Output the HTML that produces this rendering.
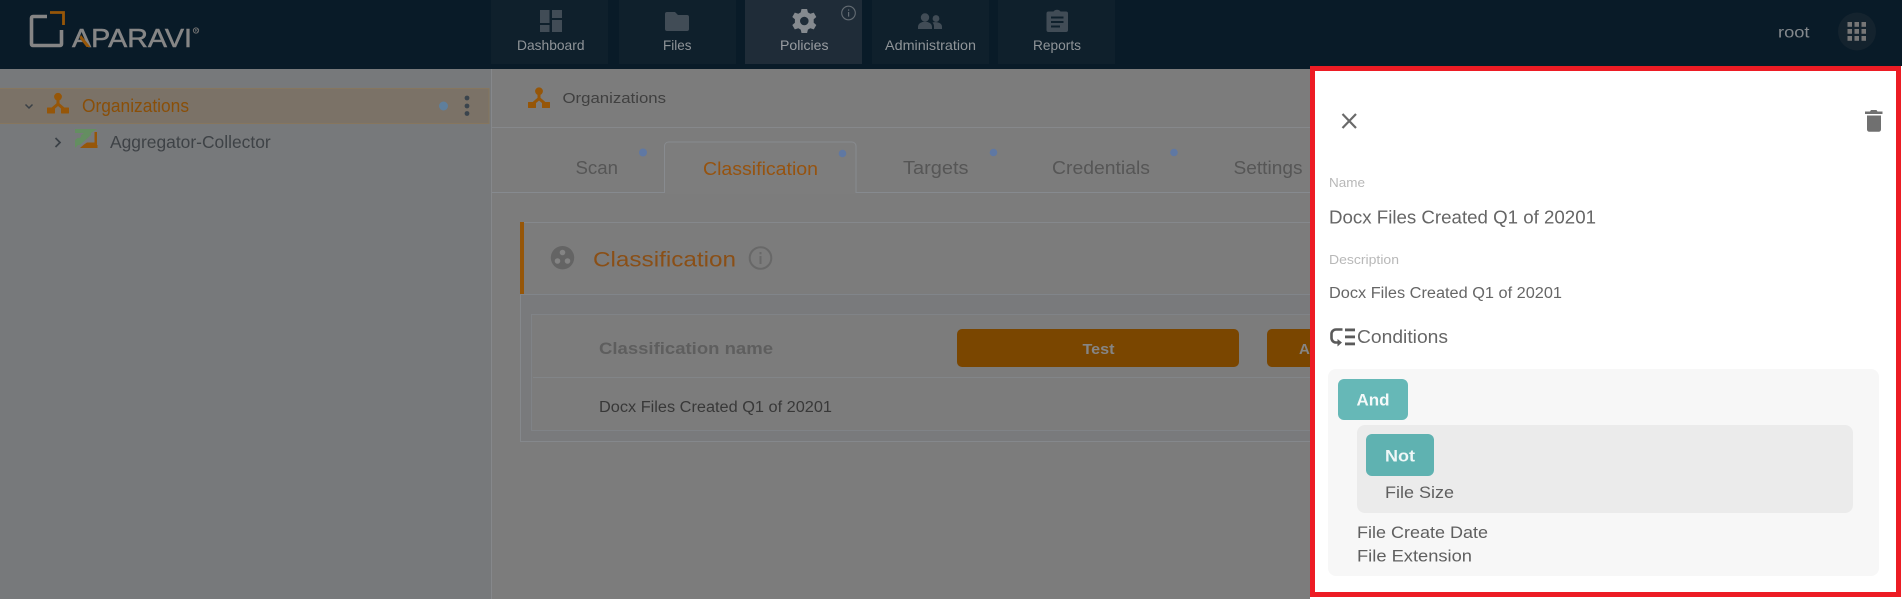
<!DOCTYPE html>
<html lang="en">
<head>
<meta charset="utf-8">
<title>Aparavi - Classification</title>
<style>
html,body{margin:0;padding:0;width:1902px;height:599px;overflow:hidden;background:#7c7c7c}
svg{display:block;position:absolute;left:0;top:0}
text{font-family:"Liberation Sans",sans-serif}
</style>
</head>
<body>
<svg width="1902" height="599" viewBox="0 0 1902 599" xmlns="http://www.w3.org/2000/svg">
<defs>
<g id="org">
<circle cx="11" cy="3.800" r="3.900"/>
<path d="M11 6V11L4 17M11 11L18 17" fill="none" stroke="currentColor" stroke-width="3"/>
<rect x="0" y="14.500" width="8" height="6" rx=".5"/>
<rect x="14" y="14.500" width="8" height="6" rx=".5"/>
</g>
</defs>

<!-- backgrounds -->
<rect x="0" y="0" width="1902" height="599" fill="#7c7c7c"/>
<rect x="0" y="69" width="491" height="530" fill="#77797b"/>
<rect x="0" y="0" width="1902" height="69" fill="#091b28"/>
<rect x="491" y="69" width="1" height="530" fill="#86888b"/>

<!-- logo -->
<path d="M47 16.500H33a1.500 1.500 0 0 0-1.500 1.500V44a1.500 1.500 0 0 0 1.500 1.500H60a1.500 1.500 0 0 0 1.500-1.500V30" fill="none" stroke="#858585" stroke-width="3.600"/>
<path d="M50 12.500H63.500V25" fill="none" stroke="#965608" stroke-width="2.800"/>
<text x="72" y="47" font-size="26" fill="#868686" stroke="#868686" stroke-width=".5" textLength="120" lengthAdjust="spacingAndGlyphs">APARAVI</text>
<path d="M79.500 38L81 35L90.500 47H86.500Z" fill="#965608"/>
<circle cx="196" cy="30.500" r="2.600" fill="none" stroke="#707070" stroke-width="1"/>
<text x="194.600" y="32.200" font-size="4.500" fill="#808080">R</text>

<!-- nav tiles -->
<rect x="491" y="0" width="117" height="64" fill="#0f202c"/>
<rect x="619" y="0" width="117" height="64" fill="#0f202c"/>
<rect x="745" y="0" width="117" height="64" fill="#1f2c38"/>
<rect x="872" y="0" width="117" height="64" fill="#0f202c"/>
<rect x="998" y="0" width="117" height="64" fill="#0f202c"/>

<!-- dashboard icon -->
<g fill="#414c56">
<rect x="540" y="10" width="9.500" height="13"/>
<rect x="552" y="10" width="10" height="8"/>
<rect x="540" y="25" width="9.500" height="7"/>
<rect x="552" y="20" width="10" height="12"/>
</g>
<!-- folder icon -->
<path d="M667 12H675L678 15H687a2 2 0 0 1 2 2V29a2 2 0 0 1-2 2H667a2 2 0 0 1-2-2V14a2 2 0 0 1 2-2Z" fill="#414c56"/>
<!-- gear icon -->
<g transform="translate(804.300 21)">
<path d="M-2.800 -12H2.800L3.600 -8.600L6 -7.300L9.500 -8.400L12 -4L9.400 -1.700V1.700L12 4L9.500 8.400L6 7.300L3.600 8.600L2.800 12H-2.800L-3.600 8.600L-6 7.300L-9.500 8.400L-12 4L-9.400 1.700V-1.700L-12 -4L-9.500 -8.400L-6 -7.300L-3.600 -8.600Z" fill="#858a8f"/>
<circle r="4.300" fill="#1f2c38"/>
</g>
<!-- info icon nav -->
<circle cx="848.500" cy="13" r="6.800" fill="none" stroke="#646c73" stroke-width="1.100"/>
<rect x="848" y="12" width="1.200" height="4.600" fill="#646c73"/>
<rect x="848" y="9.400" width="1.200" height="1.300" fill="#646c73"/>
<!-- admin icon -->
<g fill="#414c56">
<circle cx="925" cy="17.500" r="4.200"/>
<path d="M918 29V27c0-3.600 3.500-5.200 7-5.200s7 1.600 7 5.200v2Z"/>
<circle cx="936" cy="18.500" r="3.400"/>
<path d="M933.800 22.200c4.600-.6 8.200 1.200 8.200 4.400V29H934V26.500c0-1.800-.6-3.100-1.600-4Z"/>
</g>
<!-- reports icon -->
<path d="M1048.500 11.500H1053.500a4 3.500 0 0 1 7 0H1066a2 2 0 0 1 2 2V30a2 2 0 0 1-2 2H1048.500a2 2 0 0 1-2-2V13.500a2 2 0 0 1 2-2Z" fill="#414c56"/>
<g fill="#0f202c">
<rect x="1051" y="16.500" width="12.500" height="2"/>
<rect x="1051" y="21" width="12.500" height="2"/>
<rect x="1051" y="25.500" width="9" height="2"/>
</g>

<!-- nav labels -->
<g font-size="14" fill="#8f9498">
<text x="517" y="50" textLength="67.500" lengthAdjust="spacingAndGlyphs">Dashboard</text>
<text x="663" y="50" textLength="28.500" lengthAdjust="spacingAndGlyphs">Files</text>
<text x="780" y="50" textLength="48.500" lengthAdjust="spacingAndGlyphs" fill="#999da1">Policies</text>
<text x="885" y="50" textLength="91" lengthAdjust="spacingAndGlyphs">Administration</text>
<text x="1033" y="50" textLength="48" lengthAdjust="spacingAndGlyphs">Reports</text>
</g>

<!-- root + apps -->
<text x="1778" y="37.500" font-size="16" fill="#84898d" textLength="31.500" lengthAdjust="spacingAndGlyphs">root</text>
<circle cx="1857" cy="31.500" r="19" fill="#14232e"/>
<g fill="#767676">
<rect x="1847.500" y="22" width="4.500" height="4.800"/><rect x="1854.500" y="22" width="4.500" height="4.800"/><rect x="1861.500" y="22" width="4.500" height="4.800"/>
<rect x="1847.500" y="29" width="4.500" height="4.800"/><rect x="1854.500" y="29" width="4.500" height="4.800"/><rect x="1861.500" y="29" width="4.500" height="4.800"/>
<rect x="1847.500" y="36" width="4.500" height="4.800"/><rect x="1854.500" y="36" width="4.500" height="4.800"/><rect x="1861.500" y="36" width="4.500" height="4.800"/>
</g>

<!-- sidebar -->
<rect x="-2" y="88.500" width="491" height="35" fill="#7b7267" stroke="#86765e" stroke-width="1"/>
<path d="M25.500 104.500L29 108L32.500 104.500" fill="none" stroke="#3a4046" stroke-width="1.500"/>
<g transform="translate(47 93)" color="#965608" fill="#965608"><use href="#org"/></g>
<text x="82" y="112" font-size="18" fill="#8a4f08" textLength="107" lengthAdjust="spacingAndGlyphs">Organizations</text>
<circle cx="443.500" cy="106" r="4.500" fill="#5f7f9c"/>
<g fill="#3a444d"><circle cx="467" cy="98" r="2.400"/><circle cx="467" cy="106" r="2.400"/><circle cx="467" cy="113.500" r="2.400"/></g>
<path d="M55.500 138L60 142.500L55.500 147" fill="none" stroke="#3a4046" stroke-width="1.700"/>
<path d="M75 129H97L91 133V135L80 145H75V140L84 133H75Z" fill="#648e61"/>
<circle cx="79" cy="136" r="2" fill="#77797b"/>
<path d="M75 142L81 142L75 148Z" fill="#648e61"/>
<path d="M94.500 132H97V145.500H94.500ZM84 144.500L87 142.500H94.500V145H97.500V148H80Z" fill="#965608"/>
<text x="110" y="148" font-size="17.500" fill="#3e4246" textLength="160.700" lengthAdjust="spacingAndGlyphs">Aggregator-Collector</text>

<!-- breadcrumb -->
<rect x="492" y="127" width="820" height="1" fill="#86888b"/>
<g transform="translate(528 87.500)" color="#965608" fill="#965608"><use href="#org"/></g>
<text x="562.500" y="103" font-size="15" fill="#404040" textLength="103.500" lengthAdjust="spacingAndGlyphs">Organizations</text>

<!-- tabs -->
<rect x="492" y="192" width="820" height="1" fill="#868a8f"/>
<path d="M664.500 192.500V146a4 4 0 0 1 4-4H852a4 4 0 0 1 4 4V192.500" fill="#7d7d7d" stroke="#888b8f" stroke-width="1"/>
<rect x="665" y="191" width="190.500" height="3" fill="#7d7d7d"/>
<g font-size="18" fill="#565656">
<text x="575.500" y="174" textLength="42.500" lengthAdjust="spacingAndGlyphs">Scan</text>
<text x="703" y="175" textLength="115" lengthAdjust="spacingAndGlyphs" fill="#96530f">Classification</text>
<text x="903" y="174" textLength="65.500" lengthAdjust="spacingAndGlyphs">Targets</text>
<text x="1052" y="174" textLength="98" lengthAdjust="spacingAndGlyphs">Credentials</text>
<text x="1233.500" y="174" textLength="69" lengthAdjust="spacingAndGlyphs">Settings</text>
</g>
<g fill="#5f78a3">
<circle cx="643" cy="152.500" r="4"/>
<circle cx="842.500" cy="153.500" r="3.800"/>
<circle cx="993.500" cy="152.500" r="3.800"/>
<circle cx="1174" cy="152.500" r="3.800"/>
</g>

<!-- classification card -->
<rect x="520.500" y="222.500" width="800" height="219" fill="#797a7c" stroke="#85888c" stroke-width="1"/>
<rect x="521" y="223" width="800" height="71" fill="#7c7c7c"/>
<rect x="520" y="294" width="800" height="1" fill="#81858a"/>
<rect x="520" y="222" width="4" height="72" fill="#965608"/>
<circle cx="562.500" cy="257.700" r="11.700" fill="#646464"/>
<g fill="#848484"><circle cx="562.500" cy="252.500" r="2.800"/><circle cx="557.500" cy="261" r="2.800"/><circle cx="567.500" cy="261" r="2.800"/></g>
<text x="593" y="266.500" font-size="21" fill="#8a4f16" textLength="143" lengthAdjust="spacingAndGlyphs">Classification</text>
<circle cx="760.500" cy="258" r="10.800" fill="none" stroke="#686868" stroke-width="2"/>
<rect x="759.500" y="256" width="2" height="8" fill="#686868"/>
<rect x="759.500" y="252" width="2" height="2.300" fill="#686868"/>

<!-- table -->
<rect x="531.500" y="314.500" width="800" height="116" fill="#7c7c7c" stroke="#808387" stroke-width="1"/>
<rect x="533" y="377" width="790" height="1" fill="#828588"/>
<text x="599" y="354" font-size="17" font-weight="700" fill="#5e5e5e" textLength="174" lengthAdjust="spacingAndGlyphs">Classification name</text>
<rect x="957" y="329" width="282" height="38" rx="5" fill="#7a4600"/>
<text x="1082.500" y="354" font-size="15" font-weight="700" fill="#858585" textLength="32" lengthAdjust="spacingAndGlyphs">Test</text>
<rect x="1267" y="329" width="60" height="38" rx="5" fill="#7a4600"/>
<text x="1299" y="354" font-size="15" font-weight="700" fill="#858585">A</text>
<text x="599" y="412" font-size="15.500" fill="#383838" textLength="233" lengthAdjust="spacingAndGlyphs">Docx Files Created Q1 of 20201</text>

<!-- right panel -->
<rect x="1310" y="66" width="592" height="533" fill="#ffffff"/>
<rect x="1312.500" y="68.500" width="586" height="526" fill="#ffffff" stroke="#ed1c24" stroke-width="5"/>
<path d="M1342.500 114L1356 128M1356 114L1342.500 128" fill="none" stroke="#6a6a6a" stroke-width="2.200"/>
<path d="M1871 110H1876.500L1877.500 111.500H1882.500V114H1865V111.500H1870ZM1867 115.500H1881V129.500a2.300 2.300 0 0 1-2.300 2.300H1869.300a2.300 2.300 0 0 1-2.300-2.300Z" fill="#707070"/>

<text x="1329" y="187" font-size="13" fill="#b8b8b8" textLength="36" lengthAdjust="spacingAndGlyphs">Name</text>
<text x="1329" y="223.500" font-size="18.500" fill="#666666" textLength="267" lengthAdjust="spacingAndGlyphs">Docx Files Created Q1 of 20201</text>
<text x="1329" y="264" font-size="13" fill="#b8b8b8" textLength="70" lengthAdjust="spacingAndGlyphs">Description</text>
<text x="1329" y="298" font-size="15.500" fill="#666666" textLength="233" lengthAdjust="spacingAndGlyphs">Docx Files Created Q1 of 20201</text>

<path d="M1342.500 329.500H1336a4.500 4.500 0 0 0-4.500 4.500V338a4.500 4.500 0 0 0 4.500 4.500H1339" fill="none" stroke="#5a5a5a" stroke-width="2.600"/>
<path d="M1337.500 339L1342 342.500L1337.500 346.500Z" fill="#5a5a5a"/>
<g fill="#5a5a5a"><rect x="1345" y="328.500" width="10" height="2.800"/><rect x="1345" y="335.500" width="10" height="2.800"/><rect x="1345" y="342.500" width="10" height="2.800"/></g>
<text x="1357" y="343" font-size="18" fill="#666666" textLength="91" lengthAdjust="spacingAndGlyphs">Conditions</text>

<rect x="1328" y="369" width="551" height="207" rx="8" fill="#f7f7f7"/>
<rect x="1338" y="379" width="70" height="41" rx="6" fill="#66b8b7"/>
<text x="1373" y="405.500" font-size="17" font-weight="700" fill="#f4f9f9" text-anchor="middle">And</text>
<rect x="1357" y="425" width="496" height="88" rx="8" fill="#ebebeb"/>
<rect x="1366" y="434" width="68" height="42" rx="6" fill="#5fb2b1"/>
<text x="1385" y="461.500" font-size="17" font-weight="700" fill="#eef7f7" textLength="30" lengthAdjust="spacingAndGlyphs">Not</text>
<text x="1385" y="498" font-size="17" fill="#5f5f5f" textLength="69" lengthAdjust="spacingAndGlyphs">File Size</text>
<text x="1357" y="538" font-size="17" fill="#5f5f5f" textLength="131" lengthAdjust="spacingAndGlyphs">File Create Date</text>
<text x="1357" y="561.500" font-size="17" fill="#5f5f5f" textLength="115" lengthAdjust="spacingAndGlyphs">File Extension</text>
</svg>
</body>
</html>
